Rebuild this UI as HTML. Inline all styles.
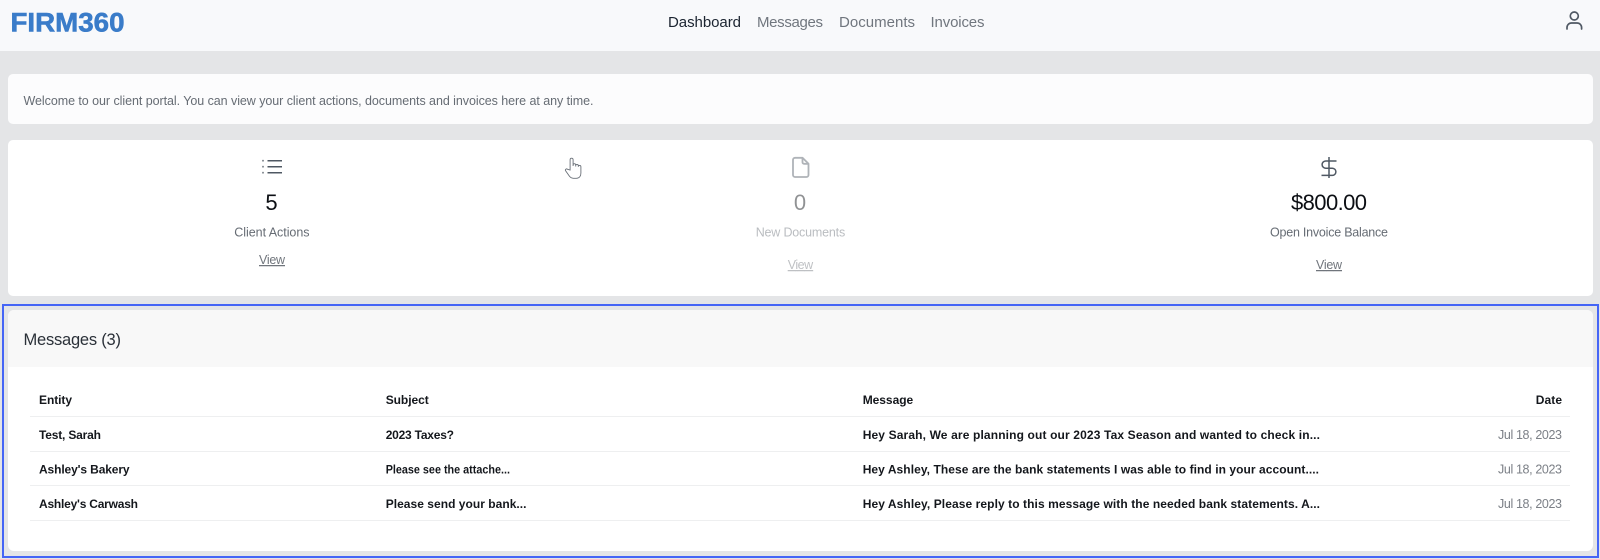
<!DOCTYPE html>
<html lang="en">
<head>
<meta charset="utf-8">
<title>Client Portal Dashboard</title>
<style>
html,body{margin:0;padding:0;width:1600px;height:559px;overflow:hidden;background:#e4e5e7}
.box{position:absolute;box-sizing:border-box}
svg{position:absolute;left:0;top:0}
text{font-family:"Liberation Sans",sans-serif;font-size:12.5px;fill:#5f6670}
.nav{font-size:15px;fill:#70767e}
.lab{fill:#666c74}
.val{font-size:22px;fill:#0c0f14}
.view{fill:#70757c}
.b{font-size:12px;font-weight:700;fill:#14171c}
.d{fill:#7c8087}
.faint{opacity:.45}
</style>
</head>
<body>
<div class="box" style="left:0;top:0;width:1600px;height:51px;background:#f8f9fb"></div>
<div class="box" style="left:8px;top:74px;width:1585px;height:50px;background:#fcfcfd;border-radius:5px"></div>
<div class="box" style="left:8px;top:140px;width:1585px;height:156px;background:#fff;border-radius:5px"></div>
<div class="box" style="left:2px;top:304px;width:1597px;height:254px;border:2px solid #4565f6"></div>
<div class="box" style="left:8px;top:310px;width:1585px;height:241px;background:#fff;border-radius:6px;overflow:hidden">
  <div style="height:57px;background:#f8f8f8"></div>
</div>
<div class="box" style="left:30px;top:416px;width:1540px;height:1px;background:#eeeff0"></div>
<div class="box" style="left:30px;top:451px;width:1540px;height:1px;background:#eeeff0"></div>
<div class="box" style="left:30px;top:485px;width:1540px;height:1px;background:#eeeff0"></div>
<div class="box" style="left:30px;top:520px;width:1540px;height:1px;background:#eeeff0"></div>

<svg width="1600" height="559" viewBox="0 0 1600 559" xmlns="http://www.w3.org/2000/svg">
  <text x="10.5" y="31.7" textLength="114" lengthAdjust="spacingAndGlyphs" style="font-size:27px;font-weight:700;fill:#3a7cc9;stroke:#3a7cc9;stroke-width:.6">FIRM360</text>

  <text x="668" y="27" textLength="73" class="nav" style="fill:#1b2430">Dashboard</text>
  <text x="757" y="27" textLength="66" class="nav">Messages</text>
  <text x="839" y="27" textLength="76" class="nav">Documents</text>
  <text x="930.5" y="27" textLength="54" class="nav">Invoices</text>

  <g fill="none" stroke="#4f5863" stroke-width="1.7" stroke-linecap="round">
    <circle cx="1574.3" cy="16" r="4"/>
    <path d="M1567 29v-1.5a4.5 4.5 0 0 1 4.5-4.5h5.6a4.5 4.5 0 0 1 4.5 4.5V29"/>
  </g>

  <text x="23.5" y="105" textLength="570" class="lab">Welcome to our client portal. You can view your client actions, documents and invoices here at any time.</text>

  <g stroke="#4f5863" stroke-width="1.5" fill="none">
    <path d="M267.5 160.7H282M267.5 166.7H282M267.5 172.7H282"/>
    <path stroke-width="1.6" stroke-dasharray="1.6 1.2" d="M262.2 160.7h2.8M262.2 166.7h2.8M262.2 172.7h2.8" opacity=".8"/>
  </g>
  <text x="271.5" y="210" text-anchor="middle" class="val">5</text>
  <text x="234.3" y="236.7" textLength="75.2" class="lab">Client Actions</text>
  <text x="259" y="264" textLength="26" class="view" text-decoration="underline">View</text>

  <path transform="translate(1.5 1)" d="M568.6 169V158.7a1.5 1.5 0 0 1 3 0V165v-1a1.3 1.3 0 0 1 2.6 0v1.5v-.8a1.3 1.3 0 0 1 2.6 0v1a1.3 1.3 0 0 1 2.6 0V172c0 3-1.5 5.3-4.5 5.3h-3c-2 0-3.3-1-4.3-2.5l-3.5-5c-.8-1.3.8-2.5 2-1.5z" fill="#fff" stroke="#6a7078" stroke-width=".9"/>

  <g class="faint">
    <g fill="none" stroke="#4f5863" stroke-width="1.8" stroke-linejoin="round">
      <path d="M795 157.8h7.5l6 6v11.2a2 2 0 0 1-2 2H795a2 2 0 0 1-2-2V159.8a2 2 0 0 1 2-2z"/>
      <path d="M802.5 158v4.2a1.6 1.6 0 0 0 1.6 1.6h4.4"/>
    </g>
    <text x="800" y="210" text-anchor="middle" class="val">0</text>
    <text x="755.7" y="236.7" textLength="89.5" class="lab">New Documents</text>
    <text x="787.7" y="269" textLength="25.5" class="view" text-decoration="underline">View</text>
  </g>

  <g fill="none" stroke="#4f5863" stroke-width="1.5">
    <path d="M1329 157v21M1336.5 161h-10.8a3.6 3.6 0 0 0 0 7.2h6.6a3.6 3.6 0 0 1 0 7.2h-10.8"/>
  </g>
  <text x="1291" y="210" textLength="76" class="val">$800.00</text>
  <text x="1270" y="236.7" textLength="118" class="lab">Open Invoice Balance</text>
  <text x="1316" y="269" textLength="26" class="view" text-decoration="underline">View</text>

  <text x="23.5" y="345" textLength="97.5" style="font-size:16.5px;fill:#2a3038">Messages (3)</text>

  <text x="39" y="404" textLength="33" class="b">Entity</text>
  <text x="385.7" y="404" textLength="43" class="b">Subject</text>
  <text x="862.7" y="404" textLength="50.5" class="b">Message</text>
  <text x="1535.7" y="404" textLength="26.3" class="b">Date</text>

  <text x="39" y="439" textLength="62" class="b">Test, Sarah</text>
  <text x="385.7" y="439" textLength="68.3" class="b">2023 Taxes?</text>
  <text x="862.7" y="439" textLength="457.3" class="b">Hey Sarah, We are planning out our 2023 Tax Season and wanted to check in...</text>
  <text x="1498" y="439" textLength="64" class="d">Jul 18, 2023</text>

  <text x="39" y="473.3" textLength="90.6" class="b">Ashley's Bakery</text>
  <text x="385.7" y="473.3" textLength="124.3" lengthAdjust="spacingAndGlyphs" class="b">Please see the attache...</text>
  <text x="862.7" y="473.3" textLength="456.3" class="b">Hey Ashley, These are the bank statements I was able to find in your account....</text>
  <text x="1498" y="473.3" textLength="64" class="d">Jul 18, 2023</text>

  <text x="39" y="508" textLength="99" class="b">Ashley's Carwash</text>
  <text x="385.7" y="508" textLength="140.8" class="b">Please send your bank...</text>
  <text x="862.7" y="508" textLength="457.3" class="b">Hey Ashley, Please reply to this message with the needed bank statements. A...</text>
  <text x="1498" y="508" textLength="64" class="d">Jul 18, 2023</text>
</svg>
</body>
</html>
